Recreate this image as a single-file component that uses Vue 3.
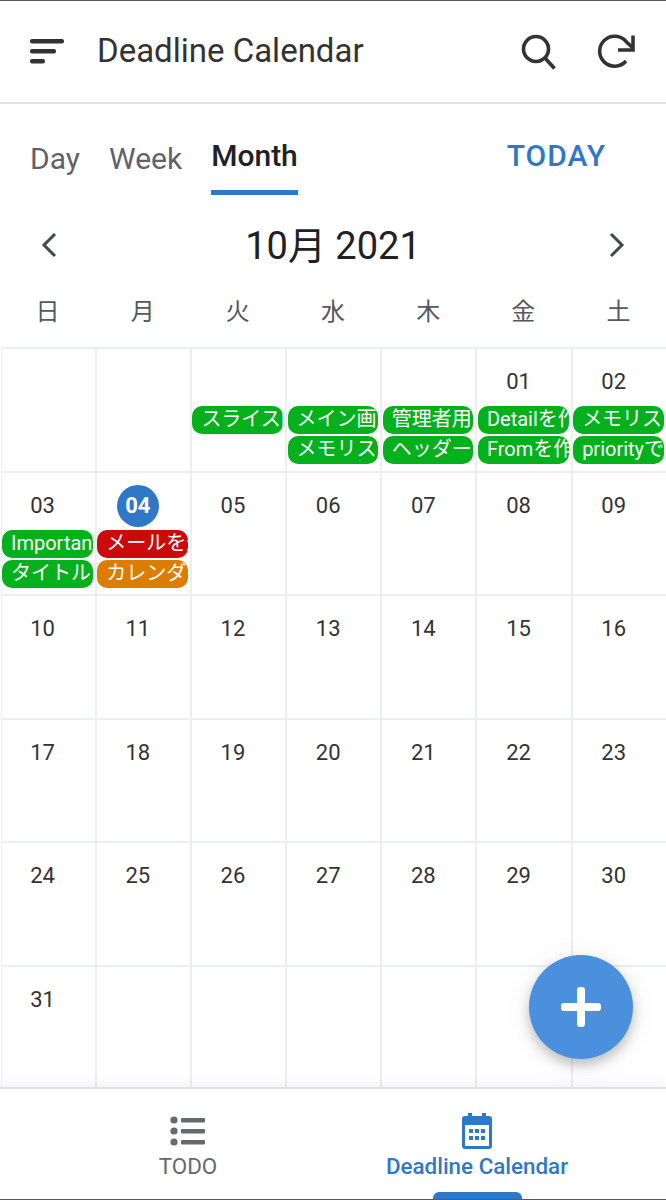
<script setup>
const weekdays = ['日', '月', '火', '水', '木', '金', '土']

const green = 'green'
const events = {
  '01': [['Detailを作成', green], ['Fromを作成', green]],
  '02': [['メモリスト', green], ['priorityで', green]],
  '03': [['Important', green], ['タイトルを', green]],
  '04': [['メールを送信', 'red'], ['カレンダー', 'orange']]
}

// leading blanks carry their own pills, they belong to September
const cells = [
  { day: '', events: [] },
  { day: '', events: [] },
  { day: '', events: [['スライス画', green]] },
  { day: '', events: [['メイン画面', green], ['メモリスト', green]] },
  { day: '', events: [['管理者用の', green], ['ヘッダーを', green]] }
]
for (let d = 1; d <= 31; d++) {
  const day = String(d).padStart(2, '0')
  cells.push({ day, events: events[day] || [], today: d === 4 })
}
for (let i = 0; i < 6; i++) cells.push({ day: '', events: [] })
</script>

<template>
  <div class="app">
    <header class="topbar">
      <svg class="menu-icon" viewBox="0 0 36 26" width="36" height="26">
        <rect x="0" y="0" width="34" height="4.5" rx="2" />
        <rect x="0" y="10" width="26" height="4.5" rx="2" />
        <rect x="0" y="20" width="15" height="4.5" rx="2" />
      </svg>
      <h1 class="title">Deadline Calendar</h1>
      <svg class="action search" viewBox="0 0 38 38" width="38" height="38">
        <circle cx="16" cy="16" r="12.5" />
        <path d="M25 25 L34.5 35.5" />
      </svg>
      <svg class="action refresh" viewBox="0 0 40 38" width="40" height="38">
        <path d="M30 28 A15 15 0 1 1 30.5 9 L37 15" />
        <path d="M37 2.5 V17 H22" />
      </svg>
    </header>

    <nav class="views">
      <span class="view">Day</span>
      <span class="view">Week</span>
      <span class="view active">Month</span>
      <span class="today-btn">TODAY</span>
    </nav>

    <div class="month-nav">
      <svg viewBox="0 0 16 26" width="16" height="26"><path d="M14 2 L3 13 L14 24" /></svg>
      <span class="month-label">10月 2021</span>
      <svg viewBox="0 0 16 26" width="16" height="26"><path d="M2 2 L13 13 L2 24" /></svg>
    </div>

    <div class="weekdays">
      <span v-for="w in weekdays" :key="w">{{ w }}</span>
    </div>

    <main class="grid">
      <div v-for="(c, i) in cells" :key="i" class="cell">
        <div class="date" :class="{ today: c.today }"><span>{{ c.day }}</span></div>
        <div v-for="e in c.events" :key="e[0]" class="pill" :class="e[1]">{{ e[0] }}</div>
      </div>
    </main>

    <button class="fab" aria-label="add">
      <svg viewBox="0 0 40 40" width="40" height="40">
        <rect x="16" y="0" width="8" height="40" rx="3" />
        <rect x="0" y="16" width="40" height="8" rx="3" />
      </svg>
    </button>

    <footer class="bottom">
      <div class="tab todo">
        <svg viewBox="0 0 36 30" width="36" height="30">
          <circle cx="4" cy="4" r="3.6" />
          <circle cx="4" cy="15" r="3.6" />
          <circle cx="4" cy="26" r="3.6" />
          <rect x="11" y="2" width="24" height="4.4" rx="1" />
          <rect x="11" y="13" width="24" height="4.4" rx="1" />
          <rect x="11" y="24" width="24" height="4.4" rx="1" />
        </svg>
        <span>TODO</span>
      </div>
      <div class="tab active">
        <svg viewBox="0 0 30 36" width="30" height="36">
          <path fill-rule="evenodd" d="M6 0h4v3h10V0h4v3h3a3 3 0 0 1 3 3v27a3 3 0 0 1-3 3H3a3 3 0 0 1-3-3V6a3 3 0 0 1 3-3h3zM3 12v21h24V12z" />
          <rect x="7" y="16" width="4" height="4" />
          <rect x="13" y="16" width="4" height="4" />
          <rect x="19" y="16" width="4" height="4" />
          <rect x="7" y="23" width="4" height="4" />
          <rect x="13" y="23" width="4" height="4" />
          <rect x="19" y="23" width="4" height="4" />
        </svg>
        <span>Deadline Calendar</span>
        <i class="indicator" />
      </div>
    </footer>
  </div>
</template>

<style>
html, body { margin: 0; background: #fff; }
</style>

<style scoped>
.app {
  position: relative;
  display: flex;
  flex-direction: column;
  width: 666px;
  height: 1200px;
  overflow: hidden;
  background: #fff;
  font-family: Roboto, "Noto Sans CJK JP", sans-serif;
  border-top: 1px solid #5a5a5a;
  border-bottom: 1px solid #5a5a5a;
  box-sizing: border-box;
}

.topbar {
  display: flex;
  align-items: center;
  flex: none;
  height: 101px;
  padding: 0 30px;
  border-bottom: 2px solid #e0e0e5;
}
.menu-icon { fill: #333; margin-top: 1px; }
.title {
  flex: 1;
  margin: -2px 0 0 31px;
  font-size: 33px;
  font-weight: 400;
  color: #333;
}
.action { fill: none; stroke: #333; stroke-width: 3.6; }
.search { margin-right: 38px; }

.views {
  display: flex;
  align-items: flex-start;
  flex: none;
  height: 92px;
  padding: 0 60px 0 30px;
}
.view {
  margin-top: 36px;
  margin-right: 29px;
  font-size: 30px;
  line-height: 38px;
  color: #5f6368;
}
.view.active {
  margin-top: 33px;
  padding: 0 0 15px;
  font-weight: 500;
  color: #202124;
  border-bottom: 5px solid #2f78c8;
}
.today-btn {
  margin: 33px 0 0 auto;
  font-size: 30px;
  line-height: 38px;
  font-weight: 500;
  letter-spacing: 1px;
  color: #2f78c8;
}

.month-nav {
  display: flex;
  align-items: center;
  justify-content: space-between;
  flex: none;
  height: 98px;
  padding: 0 41px;
}
.month-nav svg { fill: none; stroke: #44474c; stroke-width: 3; }
.month-label { margin-top: -6px; font-size: 38px; color: #202124; }

.weekdays {
  display: grid;
  grid-template-columns: repeat(7, 1fr);
  flex: none;
  height: 53px;
  text-align: center;
  font-size: 24px;
  line-height: 36px;
  color: #55585d;
}

.grid {
  display: grid;
  grid-template-columns: repeat(7, 95.2px);
  grid-auto-rows: 123.6px;
  flex: 1;
  min-height: 0;
  margin-left: 0.5px;
  overflow: hidden;
  border-top: 2px solid #eceef2;
  border-left: 1px solid #eceef2;
}
.cell {
  min-width: 0;
  padding: 12px 2px 0 0.5px;
  border-right: 2px solid #eceef2;
  border-bottom: 2px solid #eceef2;
  box-sizing: border-box;
}
.date {
  display: flex;
  justify-content: center;
  height: 42px;
  margin-bottom: 3px;
  padding-right: 9.5px;
  font-size: 22px;
  line-height: 42px;
  color: #333;
}
.date.today span {
  width: 42px;
  height: 42px;
  border-radius: 50%;
  background: #2f78c8;
  color: #fff;
  font-weight: 700;
  text-align: center;
}
.pill {
  height: 28px;
  margin-bottom: 2px;
  padding-left: 9px;
  border-radius: 10px;
  overflow: hidden;
  white-space: nowrap;
  font-size: 20px;
  line-height: 27px;
  color: #fff;
}
.pill.green { background: #04b01c; }
.pill.red { background: #cc0a0a; }
.pill.orange { background: #dc7c00; }

.fab {
  position: absolute;
  left: 529px;
  top: 954px;
  display: flex;
  align-items: center;
  justify-content: center;
  width: 104px;
  height: 104px;
  padding: 0;
  border: 0;
  border-radius: 50%;
  background: #4a90dc;
  box-shadow: 0 6px 12px rgba(0, 0, 0, 0.22), 0 3px 30px rgba(0, 0, 0, 0.08);
}
.fab svg { fill: #fff; }

.bottom {
  position: relative;
  display: grid;
  grid-template-columns: 376px 202px;
  flex: none;
  height: 112px;
  background: #fff;
  border-top: 2px solid #e0e0e5;
  box-shadow: 0 -6px 10px rgba(0, 0, 0, 0.04);
  box-sizing: border-box;
}
.tab {
  display: flex;
  flex-direction: column;
  align-items: center;
  padding-top: 24px;
  font-size: 22.4px;
  line-height: 26px;
  color: #66696e;
}
.tab svg { fill: #66696e; margin-bottom: 4px; height: 36px; }
.tab.active { font-weight: 500; color: #2f78c8; }
.tab.active svg { fill: #2f78c8; }
.indicator {
  width: 89px;
  height: 8px;
  margin-top: 13px;
  border-radius: 6px 6px 0 0;
  background: #2f78c8;
}
</style>
